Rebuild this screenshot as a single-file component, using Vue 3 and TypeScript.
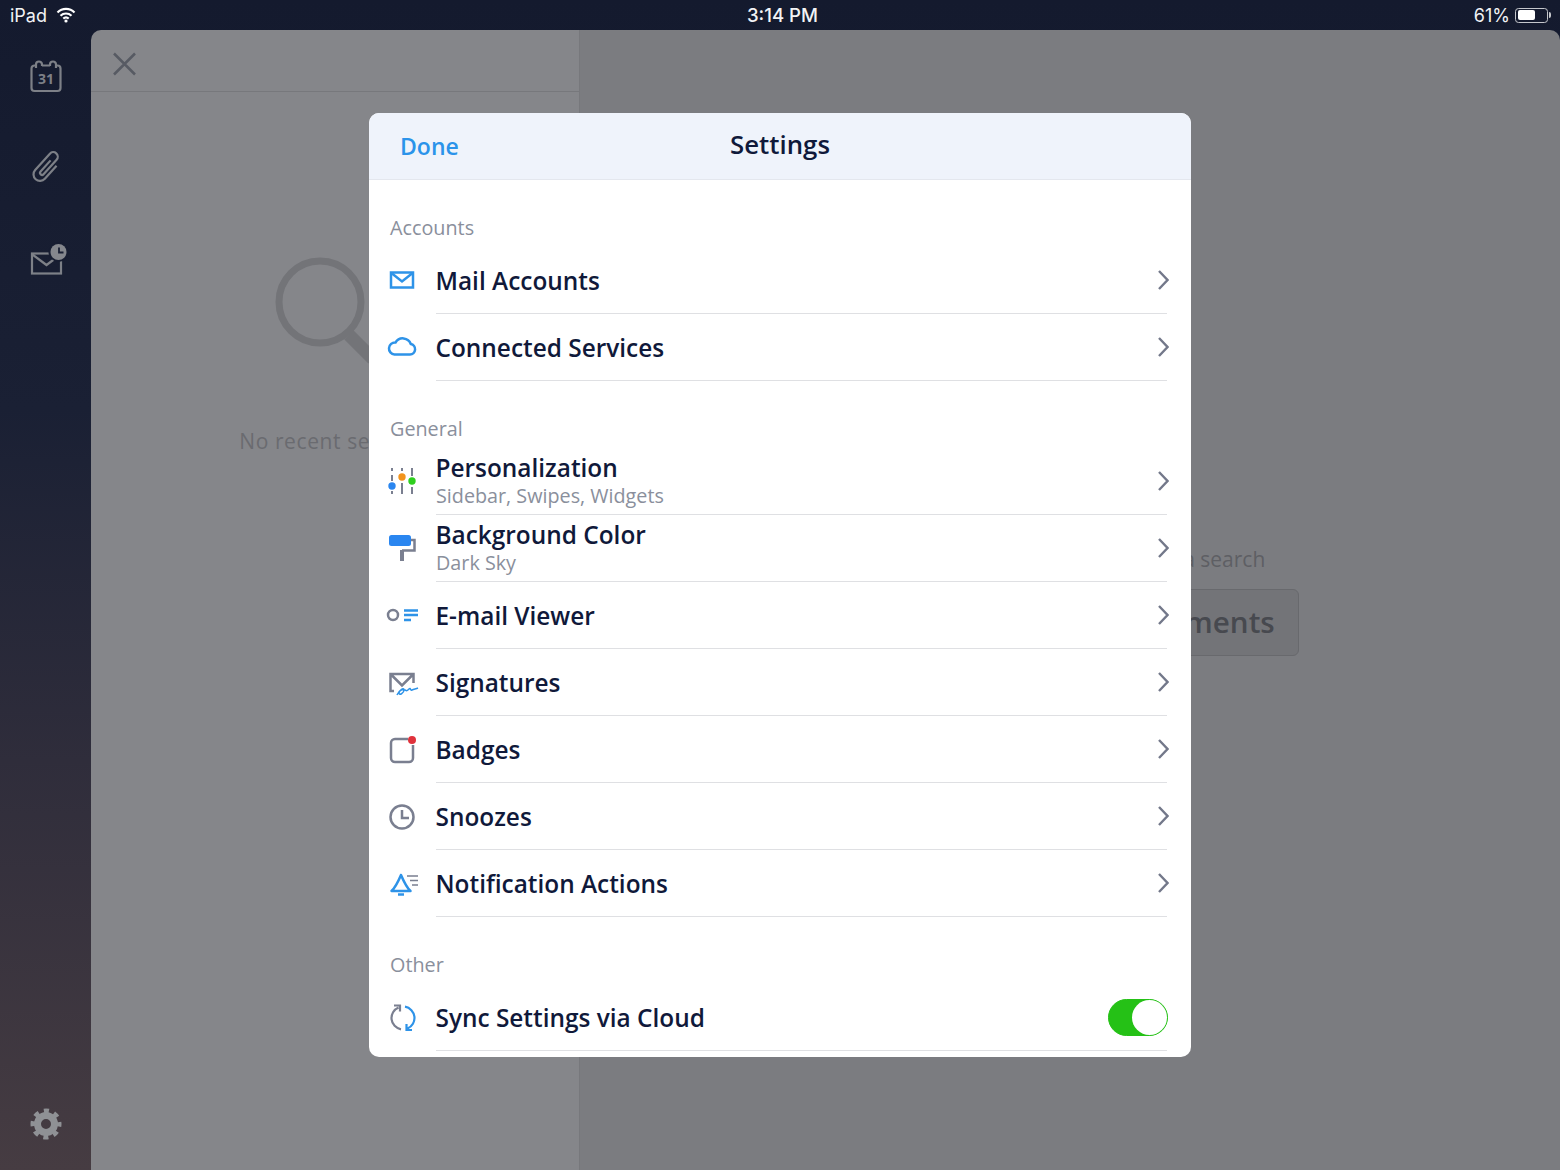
<script setup lang="ts">
type Row = { title: string; sub?: string; icon: string }

const accounts: Row[] = [
  { title: 'Mail Accounts', icon: 'mail' },
  { title: 'Connected Services', icon: 'cloud' }
]
const general: Row[] = [
  { title: 'Personalization', sub: 'Sidebar, Swipes, Widgets', icon: 'sliders' },
  { title: 'Background Color', sub: 'Dark Sky', icon: 'roller' },
  { title: 'E-mail Viewer', icon: 'viewer' },
  { title: 'Signatures', icon: 'signature' },
  { title: 'Badges', icon: 'badge' },
  { title: 'Snoozes', icon: 'clock' },
  { title: 'Notification Actions', icon: 'bell' }
]
const sections = [
  { name: 'Accounts', rows: accounts },
  { name: 'General', rows: general }
]
</script>

<template>
  <div class="page">
    <div class="statusbar">
      <div class="status-left">
        <span>iPad</span>
        <svg width="20" height="16" viewBox="0 0 20 16" class="wifi">
          <path d="M1.5 5.5a12 12 0 0 1 17 0" />
          <path d="M4.5 8.7a8 8 0 0 1 11 0" />
          <path d="M7.3 11.6a4 4 0 0 1 5.4 0" />
          <circle cx="10" cy="14" r="1.6" />
        </svg>
      </div>
      <div class="status-time">3:14 PM</div>
      <div class="status-right">
        <span>61%</span>
        <div class="battery"><div class="battery-level" style="width: 61%"></div></div>
        <div class="battery-nub"></div>
      </div>
    </div>

    <div class="main">
      <aside class="sidebar">
        <svg class="side-icon calendar" width="36" height="36" viewBox="0 0 36 36">
          <path d="M8 6.5H6.5a3 3 0 0 0-3 3V29a3 3 0 0 0 3 3h23a3 3 0 0 0 3-3V9.5a3 3 0 0 0-3-3H28M22 6.5h-8" />
          <path d="M8 9V5.5a2.5 2.5 0 0 1 6 0V7M22 7V5.5a2.5 2.5 0 0 1 6 0V9" />
          <text x="18" y="25" text-anchor="middle" class="cal-text">31</text>
        </svg>
        <svg class="side-icon clip" width="36" height="36" viewBox="0 0 36 36">
          <g transform="rotate(42 18 18)">
            <path d="M25 10v17.5a6.5 6.5 0 0 1-13 0V5.5a4.5 4.5 0 0 1 9 0V25a2 2 0 0 1-4 0V10" />
          </g>
        </svg>
        <svg class="side-icon envelope" width="36" height="36" viewBox="0 0 36 36">
          <rect x="4" y="11.5" width="29" height="20" />
          <path d="M4.5 12.5l14 10.5L32.5 12.5" />
          <circle cx="30.5" cy="10" r="10" class="clock-gap" />
          <circle cx="30.5" cy="10" r="8" class="clock-face" />
          <path d="M31 5.5V10.5h4.5" class="clock-hand" />
        </svg>
        <svg class="side-icon gear" width="36" height="36" viewBox="0 0 36 36">
          <circle cx="18" cy="18" r="8.5" class="gear-ring" />
          <circle cx="18" cy="18" r="13" class="gear-teeth" />
        </svg>
      </aside>

      <section class="left-pane">
        <div class="pane-head">
          <svg width="26" height="26" viewBox="0 0 26 26" class="close">
            <path d="M3 2.5l21 21M24 2.5l-21 21" />
          </svg>
        </div>
        <div class="pane-empty">
          <svg width="110" height="120" viewBox="0 0 110 120" class="magnifier">
            <circle cx="45" cy="45" r="41" />
            <path d="M74 78l24 24" class="magnifier-handle" />
          </svg>
          <p class="empty-text">No recent searches</p>
        </div>
      </section>

      <section class="right-pane">
        <p class="empty-text">You can find old attachments in a search</p>
        <div class="attach-btn">Browse all your attachments</div>
      </section>
    </div>

    <div class="modal">
      <header class="modal-head">
        <span class="done">Done</span>
        <h1 class="modal-title">Settings</h1>
        <span></span>
      </header>

      <div v-for="section in sections" :key="section.name">
        <div class="section-label">{{ section.name }}</div>
        <div v-for="row in section.rows" :key="row.title" class="row">
          <svg class="row-icon" width="36" height="36" viewBox="0 0 36 36">
            <g v-if="row.icon === 'mail'" class="blue">
              <rect x="7" y="10.5" width="22" height="15" />
              <path d="M8 11.5l10 8 10-8" />
            </g>
            <g v-else-if="row.icon === 'cloud'" class="blue">
              <path d="M10.5 25.5H26a5.3 5.3 0 0 0 .8-10.5A8.5 8.5 0 0 0 11.5 13.5 6 6 0 0 0 10.5 25.5z" />
            </g>
            <g v-else-if="row.icon === 'sliders'" class="grey thin">
              <path d="M8 5v3M8 12v6M8 28v3M18 5v3M18 20v11M28 5v8M28 24v7" />
              <circle cx="8" cy="23" r="3.7" class="dot-blue" />
              <circle cx="18" cy="14" r="3.7" class="dot-orange" />
              <circle cx="28" cy="18" r="3.7" class="dot-green" />
            </g>
            <g v-else-if="row.icon === 'roller'">
              <rect x="5" y="5" width="22" height="11" rx="2.5" class="dot-blue" />
              <path d="M27 10h3.5v10.5H18" class="grey-line" />
              <path d="M18 20v11" class="grey-stem" />
            </g>
            <g v-else-if="row.icon === 'viewer'">
              <circle cx="9" cy="18" r="5" class="grey" />
              <path d="M20 13.5h14M20 18h14M20 23h7" class="blue-line" />
            </g>
            <g v-else-if="row.icon === 'signature'">
              <path d="M10 27H6.5V10h23v9M7 10.5l11 11 11-11" class="grey" />
              <path d="M13 31c2-5 7-8 7-5s-5 6-5 3 4-4 6-3 2 1 4-1 1 2 3 1 4-1 6-2" class="blue thin-line" />
            </g>
            <g v-else-if="row.icon === 'badge'">
              <path d="M24 8H11a4 4 0 0 0-4 4v15a4 4 0 0 0 4 4h14a4 4 0 0 0 4-4V14" class="grey" />
              <circle cx="28" cy="9" r="4" class="dot-red" />
            </g>
            <g v-else-if="row.icon === 'clock'" class="grey">
              <circle cx="18" cy="19" r="11.5" />
              <path d="M18 12v8h7" />
            </g>
            <g v-else-if="row.icon === 'bell'">
              <path d="M17 10C14 17 11 23 7.5 26h19C23 23 20 17 17 10z" class="blue round" />
              <path d="M14 29.5h6" class="blue" />
              <path d="M23 11h11M26 15.5h8M28 20h6" class="grey thin-line" />
            </g>
          </svg>
          <div class="row-body">
            <div class="row-text">
              <div class="row-title">{{ row.title }}</div>
              <div v-if="row.sub" class="row-sub">{{ row.sub }}</div>
            </div>
            <svg class="chevron" width="12" height="22" viewBox="0 0 12 22">
              <path d="M2 2l8.5 9L2 20" />
            </svg>
          </div>
        </div>
      </div>

      <div class="section-label">Other</div>
      <div class="row">
        <svg class="row-icon sync" width="36" height="36" viewBox="0 0 36 36">
          <path d="M17 30.3A11.5 11.5 0 0 1 14.5 8.4M16 12.5V6.5H10" class="grey" />
          <path d="M21 7.7A11.5 11.5 0 0 1 23.5 29.6M22.5 25V31H28" class="blue" />
        </svg>
        <div class="row-body">
          <div class="row-text">
            <div class="row-title">Sync Settings via Cloud</div>
          </div>
          <div class="toggle"><div class="knob"></div></div>
        </div>
      </div>
    </div>
  </div>
</template>

<style scoped>
.page {
  position: relative;
  width: 1560px;
  height: 1170px;
  overflow: hidden;
  display: flex;
  flex-direction: column;
  background: linear-gradient(180deg, #141a2e 0%, #1a2034 35%, #2f2d3b 65%, #463c42 100%);
  font-family: "Open Sans", sans-serif;
}

.statusbar {
  height: 30px;
  flex: none;
  display: grid;
  grid-template-columns: 1fr auto 1fr;
  align-items: center;
  padding: 0 9px 0 10px;
  color: #f2f3f5;
  font-family: Inter, sans-serif;
  font-size: 18px;
}

.status-left {
  display: flex;
  align-items: center;
  gap: 9px;
}

.wifi {
  fill: none;
  stroke: #fff;
  stroke-width: 2.2;
}

.wifi circle {
  fill: #fff;
  stroke: none;
}

.status-time {
  font-weight: 500;
  font-size: 18.6px;
  margin-left: 4px;
}

.status-right {
  display: flex;
  align-items: center;
  justify-content: flex-end;
}

.battery {
  width: 33px;
  height: 15px;
  margin-left: 5px;
  padding: 1.5px;
  box-sizing: border-box;
  border: 1px solid #c5c7cc;
  border-radius: 3.5px;
}

.battery-level {
  height: 100%;
  background: #fff;
  border-radius: 2px;
}

.battery-nub {
  width: 2px;
  height: 6px;
  margin-left: 1px;
  background: #c5c7cc;
  border-radius: 0 2px 2px 0;
}

.main {
  flex: 1;
  display: flex;
  min-height: 0;
}

.sidebar {
  width: 91px;
  flex: none;
  display: flex;
  flex-direction: column;
  align-items: center;
  padding: 29px 0 28px;
  box-sizing: border-box;
}

.side-icon {
  overflow: visible;
  fill: none;
  stroke: #7d8087;
  stroke-width: 2.2;
}

.clip {
  margin-top: 54px;
}

.envelope {
  margin-top: 57px;
}

.gear {
  margin-top: auto;
  stroke: #8f9195;
}

.cal-text {
  fill: #7d8087;
  stroke: none;
  font-size: 14px;
  font-weight: 700;
  font-family: "Open Sans", sans-serif;
}

.clock-gap {
  fill: #171d31;
  stroke: none;
}

.clock-face {
  fill: #85878d;
  stroke: none;
}

.clock-hand {
  stroke: #1a2034;
  stroke-width: 1.8;
}

.gear-ring {
  stroke-width: 7;
}

.gear-teeth {
  stroke-width: 5;
  stroke-dasharray: 5 5.21;
  stroke-dashoffset: 2.5;
}

.left-pane {
  width: 489px;
  flex: none;
  background: #85868a;
  border-top-left-radius: 10px;
  border-right: 1px solid #77787c;
  box-sizing: border-box;
}

.pane-head {
  height: 62px;
  padding: 21px 0 0 20px;
  box-sizing: border-box;
  border-bottom: 1px solid #77787c;
}

.close {
  display: block;
  fill: none;
  stroke: #575a63;
  stroke-width: 2.5;
}

.pane-empty {
  display: flex;
  flex-direction: column;
  align-items: center;
  padding-top: 165px;
}

.magnifier {
  margin-left: -11px;
  fill: none;
  stroke: #737478;
  stroke-width: 7;
}

.magnifier-handle {
  stroke-width: 13;
}

.empty-text {
  margin: 0;
  font-size: 21px;
  line-height: 28px;
  color: #5e5f64;
}

.right-pane .empty-text {
  margin-right: 6px;
}

.pane-empty .empty-text {
  margin-top: 50px;
  margin-left: 8px;
  letter-spacing: 0.6px;
  color: #6a6b70;
}

.right-pane {
  flex: 1;
  background: #7b7c80;
  border-top-right-radius: 10px;
  display: flex;
  flex-direction: column;
  align-items: center;
  padding-top: 515px;
}

.attach-btn {
  margin-top: 16px;
  height: 67px;
  padding: 0 23px 2px;
  display: flex;
  align-items: center;
  box-sizing: border-box;
  border: 1px solid #68696d;
  border-radius: 6px;
  background: #737478;
  color: #47494f;
  font-size: 29.6px;
  font-weight: 600;
}

.modal {
  position: absolute;
  left: 369px;
  top: 113px;
  width: 822px;
  height: 944px;
  overflow: hidden;
  background: #fff;
  border-radius: 10px;
}

.modal-head {
  height: 67px;
  box-sizing: border-box;
  display: grid;
  grid-template-columns: 1fr auto 1fr;
  align-items: center;
  padding: 0 31px;
  background: #eff3fb;
  border-bottom: 1px solid #e4e7ee;
}

.done {
  font-size: 23px;
  font-weight: 600;
  color: #2b93ea;
}

.modal-title {
  margin: 0;
  padding-bottom: 5px;
  font-size: 25.8px;
  font-weight: 600;
  color: #10193a;
}

.section-label {
  height: 67px;
  box-sizing: border-box;
  padding: 34px 0 0 21px;
  font-size: 19.8px;
  line-height: 28px;
  color: #8a8f9c;
}

.row {
  height: 67px;
  display: flex;
}

.row-icon {
  flex: none;
  width: 36px;
  height: 36px;
  margin: 15px 16px 0 15px;
  overflow: visible;
  fill: none;
  stroke-width: 2.5;
}

.sync {
  stroke-width: 2.2;
}

.blue {
  stroke: #2e93e8;
}

.grey {
  stroke: #7a7f90;
}

.round {
  stroke-linejoin: round;
}

.thin {
  stroke-width: 2;
}

.thin-line {
  stroke-width: 1.5;
}

.blue-line {
  stroke: #2e93e8;
  stroke-width: 2.5;
}

.grey-line {
  stroke: #7a7f90;
  stroke-width: 2.5;
}

.grey-stem {
  stroke: #7a7f90;
  stroke-width: 4;
}

.dot-blue {
  fill: #2a86f0;
  stroke: none;
}

.dot-orange {
  fill: #f2941e;
  stroke: none;
}

.dot-green {
  fill: #2fcf1f;
  stroke: none;
}

.dot-red {
  fill: #e0323c;
  stroke: none;
}

.row-body {
  flex: 1;
  margin-right: 24px;
  display: flex;
  align-items: center;
  justify-content: space-between;
  border-bottom: 1px solid #dfe0e3;
}

.row-title {
  font-size: 24.4px;
  font-weight: 600;
  line-height: 29px;
  color: #10193a;
  margin-left: -0.5px;
}

.row-sub {
  font-size: 19.75px;
  line-height: 27px;
  color: #8a8f9c;
}

.chevron {
  margin-right: -2px;
  fill: none;
  stroke: #73788a;
  stroke-width: 2.4;
}

.toggle {
  width: 60px;
  height: 37px;
  margin-right: -1px;
  display: flex;
  justify-content: flex-end;
  box-sizing: border-box;
  background: #25c116;
  border-radius: 19px;
  border: 1px solid #25c116;
}

.knob {
  width: 35px;
  height: 35px;
  background: #fff;
  border-radius: 50%;
}
</style>
